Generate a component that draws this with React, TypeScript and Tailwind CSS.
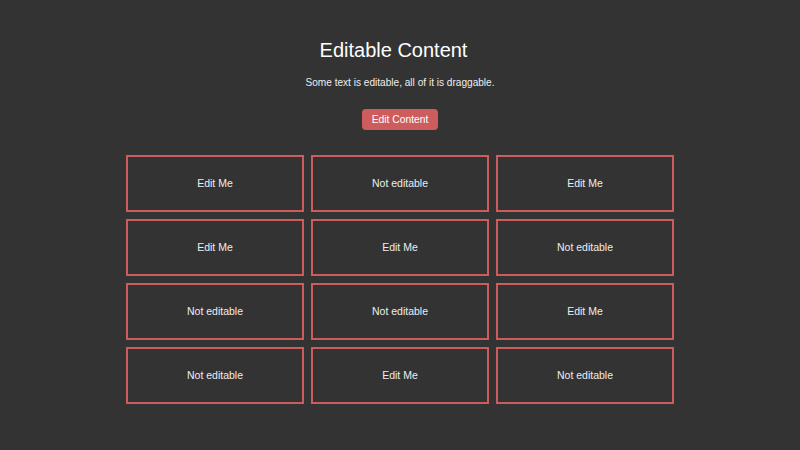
import React from "react";

const cells = [
  "Edit Me", "Not editable", "Edit Me",
  "Edit Me", "Edit Me", "Not editable",
  "Not editable", "Not editable", "Edit Me",
  "Not editable", "Edit Me", "Not editable",
];

export default function App() {
  return (
    <div
      className="w-[800px] h-[450px] bg-[#333333] flex flex-col items-center text-[#eeeeee] overflow-hidden"
      style={{ fontFamily: '"Liberation Sans", Arial, sans-serif' }}
    >
      <h1 className="mt-[38px] mr-[13px] text-[20px] leading-[24px] text-white">Editable Content</h1>
      <p className="mt-[14px] text-[10.1px] leading-[14px]">
        Some text is editable, all of it is draggable.
      </p>
      <button className="mt-[19px] h-[21px] flex items-center bg-[#cd5c5c] text-white text-[10.3px] leading-[13px] px-[10px] rounded-[4px]">
        Edit Content
      </button>
      <div className="mt-[25px] w-[548px] grid grid-cols-3 gap-[7px]">
        {cells.map((c, i) => (
          <div
            key={i}
            className="h-[57px] border-2 border-[#cd5c5c] flex items-center justify-center text-[10.5px]"
          >
            {c}
          </div>
        ))}
      </div>
    </div>
  );
}
